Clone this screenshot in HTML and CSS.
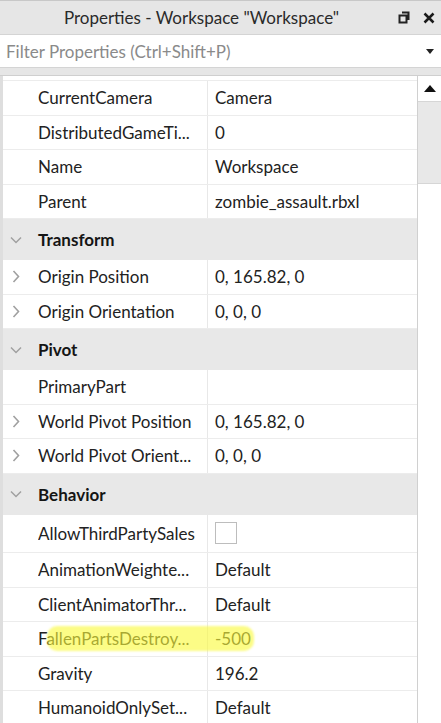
FILE: index.html
```html
<!DOCTYPE html>
<html>
<head>
<meta charset="utf-8">
<link rel="stylesheet" href="styles.css">
</head>
<body>
<div class="panel">
  <div class="titlebar">
    <span class="title">Properties - Workspace "Workspace"</span>
    <div class="tb-icons">
      <svg class="ic-restore" width="12" height="13" viewBox="0 0 12 13"><path d="M4 1.5h6.5v6.5h-2M1.5 4.5h7v7h-7z" fill="none" stroke="#222" stroke-width="2"/></svg>
      <svg class="ic-close" width="12" height="12" viewBox="0 0 12 12"><path d="M1.5 1.5l9 9M10.5 1.5l-9 9" stroke="#1a1a1a" stroke-width="2.5"/></svg>
    </div>
  </div>
  <div class="filter">
    <span class="filter-text">Filter Properties (Ctrl+Shift+P)</span>
    <svg class="drop" width="8" height="5" viewBox="0 0 8 5"><path d="M0 0h8L4 5z" fill="#222"/></svg>
  </div>
  <div class="body">
    <div class="grid">
      <div class="peek"></div>
      <div class="row"><span class="chev"></span><span class="name">CurrentCamera</span><span class="val">Camera</span></div>
      <div class="row"><span class="chev"></span><span class="name">DistributedGameTi...</span><span class="val">0</span></div>
      <div class="row"><span class="chev"></span><span class="name">Name</span><span class="val">Workspace</span></div>
      <div class="row"><span class="chev"></span><span class="name">Parent</span><span class="val">zombie_assault.rbxl</span></div>
      <div class="cat"><span class="chev"><svg width="12" height="8" viewBox="0 0 12 8"><path d="M1 1.5l5 5 5-5" fill="none" stroke="#a0a0a0" stroke-width="1.5"/></svg></span><span class="catname">Transform</span></div>
      <div class="row"><span class="chev"><svg width="8" height="13" viewBox="0 0 8 13"><path d="M1.5 1l5 5.5-5 5.5" fill="none" stroke="#a0a0a0" stroke-width="1.6"/></svg></span><span class="name">Origin Position</span><span class="val">0, 165.82, 0</span></div>
      <div class="row"><span class="chev"><svg width="8" height="13" viewBox="0 0 8 13"><path d="M1.5 1l5 5.5-5 5.5" fill="none" stroke="#a0a0a0" stroke-width="1.6"/></svg></span><span class="name">Origin Orientation</span><span class="val">0, 0, 0</span></div>
      <div class="cat"><span class="chev"><svg width="12" height="8" viewBox="0 0 12 8"><path d="M1 1.5l5 5 5-5" fill="none" stroke="#a0a0a0" stroke-width="1.5"/></svg></span><span class="catname">Pivot</span></div>
      <div class="row"><span class="chev"></span><span class="name">PrimaryPart</span><span class="val"></span></div>
      <div class="row"><span class="chev"><svg width="8" height="13" viewBox="0 0 8 13"><path d="M1.5 1l5 5.5-5 5.5" fill="none" stroke="#a0a0a0" stroke-width="1.6"/></svg></span><span class="name">World Pivot Position</span><span class="val">0, 165.82, 0</span></div>
      <div class="row"><span class="chev"><svg width="8" height="13" viewBox="0 0 8 13"><path d="M1.5 1l5 5.5-5 5.5" fill="none" stroke="#a0a0a0" stroke-width="1.6"/></svg></span><span class="name">World Pivot Orient...</span><span class="val">0, 0, 0</span></div>
      <div class="cat"><span class="chev"><svg width="12" height="8" viewBox="0 0 12 8"><path d="M1 1.5l5 5 5-5" fill="none" stroke="#a0a0a0" stroke-width="1.5"/></svg></span><span class="catname">Behavior</span></div>
      <div class="row tall"><span class="chev"></span><span class="name">AllowThirdPartySales</span><span class="val"><span class="checkbox"></span></span></div>
      <div class="row"><span class="chev"></span><span class="name">AnimationWeighte...</span><span class="val">Default</span></div>
      <div class="row"><span class="chev"></span><span class="name">ClientAnimatorThr...</span><span class="val">Default</span></div>
      <div class="row hl"><span class="chev"></span><span class="name">FallenPartsDestroy...</span><span class="val">-500</span><span class="marker"></span></div>
      <div class="row"><span class="chev"></span><span class="name">Gravity</span><span class="val">196.2</span></div>
      <div class="row"><span class="chev"></span><span class="name">HumanoidOnlySet...</span><span class="val">Default</span></div>
    </div>
    <div class="scrollbar">
      <div class="sb-up"><svg width="12" height="7" viewBox="0 0 12 7"><path d="M0 7h12L6 0z" fill="#111"/></svg></div>
      <div class="sb-thumb"></div>
      <div class="sb-track"></div>
    </div>
  </div>
</div>
</body>
</html>
```
FILE: styles.css
```css
* { box-sizing: border-box; }
html, body { margin: 0; padding: 0; }
body {
  width: 441px;
  height: 723px;
  overflow: hidden;
  background: #e6e6e6;
  font-family: Lato, "Liberation Sans", sans-serif;
  color: #222;
}
.panel {
  display: flex;
  flex-direction: column;
  height: 723px;
}
.titlebar {
  height: 34px;
  display: flex;
  align-items: center;
  background: #e6e6e6;
  border-top: 1px solid #c8c8c8;
}
.title {
  flex: 1;
  text-align: center;
  font-size: 17px;
  color: #2a2a2a;
  padding-left: 8px;
}
.tb-icons {
  display: flex;
  align-items: center;
  gap: 13px;
  padding-right: 6px;
  width: 46px;
  justify-content: flex-end;
}
.filter {
  height: 34px;
  background: #fff;
  border-top: 1px solid #d4d4d4;
  border-bottom: 1px solid #d4d4d4;
  display: flex;
  align-items: center;
  padding: 0 6px;
}
.filter-text {
  flex: 1;
  font-size: 17px;
  color: #8a8a8a;
}
.drop { margin-right: 1px; }
.body {
  margin-top: 7px;
  flex: 1;
  display: flex;
  border-top: 1px solid #cfcfcf;
  min-height: 0;
  overflow: hidden;
}
.grid {
  width: 418px;
  background: #fff;
  border-left: 3px solid #dedede;
  border-right: 1px solid #d0d0d0;
}
.peek {
  height: 5px;
  border-bottom: 1px solid #ececec;
}
.row {
  position: relative;
  height: 34.5px;
  display: grid;
  grid-template-columns: 35px 170px 1fr;
  align-items: center;
  border-bottom: 1px solid #ececec;
  font-size: 17px;
}
.row.tall { height: 38.5px; }
.chev {
  display: flex;
  align-items: center;
  padding-left: 9px;
  height: 100%;
}
.name {
  height: 100%;
  display: flex;
  align-items: center;
  border-right: 1px solid #e8e8e8;
  white-space: nowrap;
  overflow: hidden;
}
.val {
  padding-left: 7px;
  white-space: nowrap;
  display: flex;
  align-items: center;
}
.cat {
  height: 41px;
  display: flex;
  align-items: center;
  background: #e8e8e8;
  font-size: 17px;
  font-weight: bold;
  color: #151515;
}
.cat .chev { width: 35px; padding-left: 7px; }
.checkbox {
  width: 22px;
  height: 22px;
  border: 1px solid #bdbdbd;
  background: #fff;
  display: inline-block;
}
.marker {
  position: absolute;
  left: 44px;
  top: 4px;
  width: 207px;
  height: 25px;
  background: rgba(250, 250, 60, 0.62);
  border-radius: 10px;
  filter: blur(1px);
}
.scrollbar {
  flex: 1;
  display: flex;
  flex-direction: column;
  background: #fff;
}
.sb-up {
  height: 26px;
  display: flex;
  align-items: center;
  justify-content: center;
  background: #fff;
  border-bottom: 1px solid #d6d6d6;
}
.sb-thumb {
  height: 82px;
  background: #e8e8e8;
  border-bottom: 1px solid #d6d6d6;
}
.sb-track { flex: 1; background: #fff; }
```
